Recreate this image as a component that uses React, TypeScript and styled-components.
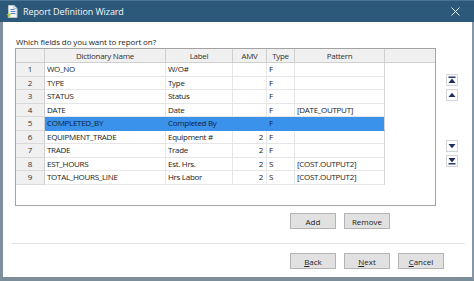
import React from 'react'
import styled, { createGlobalStyle } from 'styled-components'

const GlobalStyle = createGlobalStyle`
    * { box-sizing: border-box; }
    body {
        margin: 0;
        overflow: hidden;
        font-family: "Open Sans", "Noto Sans", sans-serif;
        color: #222;
    }
`;

type Field = {
    name: string;
    label: string;
    amv: string;
    type: string;
    pattern: string;
};

const fields: Field[] = [
    { name: 'WO_NO', label: 'W/O#', amv: '', type: 'F', pattern: '' },
    { name: 'TYPE', label: 'Type', amv: '', type: 'F', pattern: '' },
    { name: 'STATUS', label: 'Status', amv: '', type: 'F', pattern: '' },
    { name: 'DATE', label: 'Date', amv: '', type: 'F', pattern: '[DATE_OUTPUT]' },
    { name: 'COMPLETED_BY', label: 'Completed By', amv: '', type: 'F', pattern: '' },
    { name: 'EQUIPMENT_TRADE', label: 'Equipment #', amv: '2', type: 'F', pattern: '' },
    { name: 'TRADE', label: 'Trade', amv: '2', type: 'F', pattern: '' },
    { name: 'EST_HOURS', label: 'Est. Hrs.', amv: '2', type: 'S', pattern: '[COST.OUTPUT2]' },
    { name: 'TOTAL_HOURS_LINE', label: 'Hrs Labor', amv: '2', type: 'S', pattern: '[COST.OUTPUT2]' },
];

const columns = [
    { key: 'num', title: '', width: 29 },
    { key: 'name', title: 'Dictionary Name', width: 121 },
    { key: 'label', title: 'Label', width: 67 },
    { key: 'amv', title: 'AMV', width: 34 },
    { key: 'type', title: 'Type', width: 28 },
    { key: 'pattern', title: 'Pattern', width: 90 },
];

const SELECTED = 4;

const WizardIcon = () => (
    <svg width="13" height="13" viewBox="0 0 13 13">
        <path d="M2.5 0.5h5.5l3 3v9h-8.5z" fill="#f4f6f8" stroke="#b9c6d2" />
        <path d="M8 0.5v3h3" fill="#dfe6ec" stroke="#b9c6d2" />
        <path d="M4.5 4.5h4M4.5 6.5h5M4.5 8.5h5" stroke="#4f86c0" />
        <path d="M0.5 9.5l1.8-0.4 0.7-1.7 0.7 1.7 1.8 0.4-1.4 1.1 0.4 1.9-1.5-1-1.5 1 0.4-1.9z" fill="#b6d23a" />
    </svg>
);

const CloseIcon = () => (
    <svg width="9" height="9" viewBox="0 0 9 9">
        <path d="M0.5 0.5l8 8M8.5 0.5l-8 8" stroke="#e4ebf1" strokeWidth="1" />
    </svg>
);

const MoveIcon = ({ dir }: { dir: 'top' | 'up' | 'down' | 'bottom' }) => (
    <svg width="10" height="10" viewBox="0 0 10 10">
        {dir === 'top' && <>
            <rect x="1.5" y="1.5" width="7" height="1.4" fill="#1c2f5e" />
            <path d="M1.5 8h7l-3.5-4.5z" fill="#1c2f5e" />
        </>}
        {dir === 'up' && <path d="M1.5 7h7l-3.5-4.2z" fill="#1c2f5e" />}
        {dir === 'down' && <path d="M1.5 3h7l-3.5 4.2z" fill="#1c2f5e" />}
        {dir === 'bottom' && <>
            <path d="M1.5 2h7l-3.5 4.5z" fill="#1c2f5e" />
            <rect x="1.5" y="7.1" width="7" height="1.4" fill="#1c2f5e" />
        </>}
    </svg>
);

const App = () => {
    return (
        <>
            <GlobalStyle />
            <Window>
                <TitleBar>
                    <WizardIcon />
                    <Title>Report Definition Wizard</Title>
                    <CloseButton><CloseIcon /></CloseButton>
                </TitleBar>
                <Body>
                    <Prompt>Which fields do you want to report on?</Prompt>
                    <Main>
                        <Grid>
                            <HeaderRow>
                                {columns.map(c => (
                                    <HeaderCell key={c.key} $width={c.width}>{c.title}</HeaderCell>
                                ))}
                                <HeaderFiller />
                            </HeaderRow>
                            {fields.map((f, i) => (
                                <Row key={f.name}>
                                    <NumCell>{i + 1}</NumCell>
                                    <Cell $width={121} $selected={i === SELECTED}>{f.name}</Cell>
                                    <Cell $width={67} $selected={i === SELECTED}>{f.label}</Cell>
                                    <Cell $width={34} $selected={i === SELECTED} $right>{f.amv}</Cell>
                                    <Cell $width={28} $selected={i === SELECTED}>{f.type}</Cell>
                                    <Cell $width={90} $selected={i === SELECTED}>{f.pattern}</Cell>
                                </Row>
                            ))}
                        </Grid>
                        <MoveColumn>
                            <MoveButton><MoveIcon dir="top" /></MoveButton>
                            <MoveButton><MoveIcon dir="up" /></MoveButton>
                            <MoveSpacer />
                            <MoveButton><MoveIcon dir="down" /></MoveButton>
                            <MoveButton><MoveIcon dir="bottom" /></MoveButton>
                        </MoveColumn>
                    </Main>
                    <ButtonRow $inset={82} $top={7}>
                        <Button>Add</Button>
                        <Button>Remove</Button>
                    </ButtonRow>
                    <Separator />
                    <ButtonRow $inset={28} $top={9}>
                        <Button><u>B</u>ack</Button>
                        <Button><u>N</u>ext</Button>
                        <Button><u>C</u>ancel</Button>
                    </ButtonRow>
                </Body>
            </Window>
        </>
    )
}

const Window = styled.div`
    width: 474px;
    height: 281px;
    display: flex;
    flex-direction: column;
    background: #fff;
`;

const TitleBar = styled.div`
    height: 22px;
    display: flex;
    align-items: center;
    padding: 0 0 0 6px;
    background: #2c5879;
    border-top: 1px solid #4a7494;
    color: #fff;
    svg { flex: none; }
`;

const Title = styled.span`
    margin-left: 4px;
    font-size: 9px;
    letter-spacing: -0.1px;
    color: #f4f7fa;
`;

const CloseButton = styled.span`
    margin-left: auto;
    width: 30px;
    height: 21px;
    margin-right: 4px;
    display: flex;
    align-items: center;
    justify-content: center;
`;

const Body = styled.div`
    flex: 1;
    display: flex;
    flex-direction: column;
    padding: 13px 0 0 12px;
    border-left: 3px solid #7f909d;
    border-right: 2px solid #8797a3;
    border-bottom: 4px solid #7a8d99;
`;

const Prompt = styled.div`
    height: 13px;
    line-height: 13px;
    font-size: 8px;
    letter-spacing: -0.1px;
    padding-left: 1px;
    color: #1e1e1e;
`;

const Main = styled.div`
    display: flex;
    align-items: flex-start;
`;

const Grid = styled.div`
    width: 421px;
    height: 158px;
    border: 1px solid #a3a3a3;
    background: #fff;
    font-size: 8px;
    letter-spacing: -0.3px;
`;

const HeaderRow = styled.div`
    display: flex;
    height: 14px;
    background: #f0f0f0;
    border-bottom: 1px solid #cfcfcf;
`;

const HeaderCell = styled.div<{ $width: number }>`
    flex: none;
    width: ${p => p.$width}px;
    border-right: 1px solid #cfcfcf;
    text-align: center;
    line-height: 13px;
    color: #333;
`;

const HeaderFiller = styled.div`
    flex: 1;
`;

const Row = styled.div`
    display: flex;
    height: 13.5px;
`;

const NumCell = styled.div`
    flex: none;
    width: 29px;
    background: #f0f0f0;
    border-right: 1px solid #cfcfcf;
    border-bottom: 1px solid #d9d9d9;
    text-align: center;
    line-height: 12.5px;
    color: #333;
`;

const Cell = styled.div<{ $width: number; $selected?: boolean; $right?: boolean }>`
    flex: none;
    width: ${p => p.$width}px;
    padding: 0 ${p => (p.$right ? '3px' : '2px')};
    text-align: ${p => (p.$right ? 'right' : 'left')};
    line-height: 12.5px;
    white-space: nowrap;
    overflow: hidden;
    background: ${p => (p.$selected ? '#3a92ea' : '#fff')};
    color: ${p => (p.$selected ? '#10233f' : '#222')};
    border-right: 1px solid ${p => (p.$selected ? '#3a92ea' : '#e6e6e6')};
    border-bottom: 1px solid ${p => (p.$selected ? '#3a92ea' : '#e6e6e6')};
    &:last-child { border-right-color: #d6d6d6; }
`;

const MoveColumn = styled.div`
    display: flex;
    flex-direction: column;
    gap: 3px;
    margin-left: 10px;
    padding-top: 26px;
`;

const MoveSpacer = styled.div`
    height: 33px;
`;

const MoveButton = styled.div`
    width: 12px;
    height: 12px;
    display: flex;
    align-items: center;
    justify-content: center;
    background: #fdfdfd;
    border: 1px solid #d2d6da;
`;

const ButtonRow = styled.div<{ $inset: number; $top: number }>`
    display: flex;
    justify-content: flex-end;
    gap: 8px;
    margin-top: ${p => p.$top}px;
    padding-right: ${p => p.$inset}px;
`;

const Button = styled.div`
    width: 46px;
    height: 16px;
    display: flex;
    align-items: center;
    justify-content: center;
    background: #e1e1e1;
    border: 1px solid #b4b4b4;
    font-size: 8px;
    color: #222;
    u { text-underline-offset: 1px; }
`;

const Separator = styled.div`
    height: 1px;
    margin: 14px 7px 0 -3px;
    background: #e3e3e3;
`;

export default App
